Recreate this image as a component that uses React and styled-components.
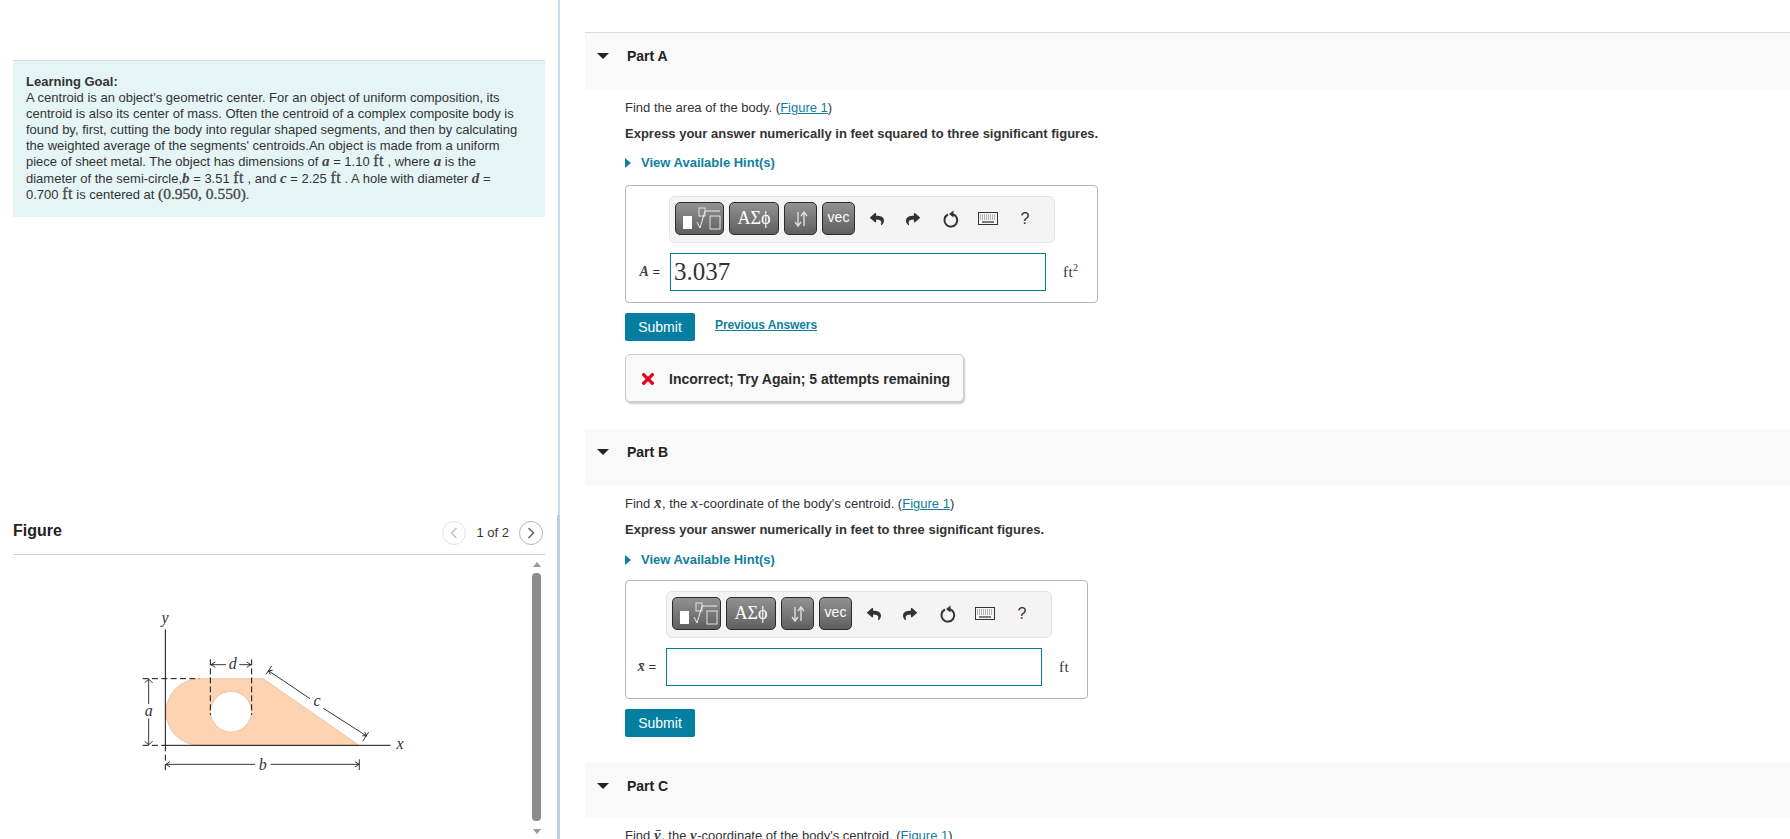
import React from "react";
import styled, { createGlobalStyle } from "styled-components";
import { FaReply, FaShare, FaTimes } from "react-icons/fa";

const GlobalStyle = createGlobalStyle`
  html, body { margin: 0; padding: 0; background: #fff; }
  body { font-family: "Liberation Sans", Arial, sans-serif; color: #333; font-size: 13px; }
`;

const Page = styled.div`
  display: flex;
  height: 839px;
  overflow: hidden;
`;

const LeftPane = styled.div`
  width: 560px;
  flex: none;
  display: flex;
  flex-direction: column;
`;

const GoalSection = styled.div`
  height: 515px;
  box-sizing: border-box;
  padding: 60px 13px 0;
  border-right: 2px solid #cbdbe9;
`;

const GoalBox = styled.div`
  height: 157px;
  box-sizing: border-box;
  padding: 13px 13px;
  background: #e5f5f6;
  border-top: 1px solid #cfdfe2;
  font-size: 13px;
  line-height: 16.1px;
  color: #333;
`;

const Math = styled.span`
  font-family: "Liberation Serif", serif;
  font-weight: ${(p) => (p.$upright ? "normal" : "bold")};
  font-style: ${(p) => (p.$upright ? "normal" : "italic")};
  font-size: ${(p) => p.$size || (p.$upright ? 16 : 15)}px;
  line-height: 0;
  letter-spacing: ${(p) => (p.$upright && !p.$size ? "0.4px" : "0")};
  -webkit-text-stroke: ${(p) => (p.$upright ? "0.3px" : "0")};
  color: #444;
`;

const FigureSection = styled.div`
  flex: 1;
  min-height: 0;
  padding: 1px 12px 0 13px;
  border-right: 3px solid #bcd1e5;
  display: flex;
  flex-direction: column;
`;

const FigureHead = styled.div`
  height: 39px;
  box-sizing: border-box;
  padding-bottom: 8px;
  border-bottom: 1px solid #d0d0d0;
  display: flex;
  align-items: center;
  justify-content: space-between;
`;

const FigureTitle = styled.div`
  font-size: 16px;
  font-weight: bold;
  color: #222;
`;

const Pager = styled.div`
  display: flex;
  align-items: center;
  gap: 10px;
  margin: 3px 2px 0 0;
  font-size: 13px;
`;

const PagerButton = styled.div`
  width: 24px;
  height: 24px;
  box-sizing: border-box;
  border-radius: 50%;
  border: 1px solid ${(p) => (p.$off ? "#e2e2e2" : "#b5b5b5")};
  display: flex;
  align-items: center;
  justify-content: center;
  color: ${(p) => (p.$off ? "#c4c4c4" : "#666")};
`;

const FigureBody = styled.div`
  flex: 1;
  min-height: 0;
  display: flex;
`;

const FigureSvg = styled.svg`
  width: 280px;
  height: 180px;
  margin: 45px 0 0 127px;
  flex: none;
`;

const ScrollBar = styled.div`
  margin-left: auto;
  width: 9px;
  height: 272px;
  margin-top: 7px;
  margin-right: 4px;
  display: flex;
  flex-direction: column;
  align-items: center;
  gap: 6px;
`;

const ScrollArrow = styled.div`
  width: 0;
  height: 0;
  border-left: 4px solid transparent;
  border-right: 4px solid transparent;
  border-bottom: ${(p) => (p.$down ? "none" : "5px solid #999")};
  border-top: ${(p) => (p.$down ? "5px solid #999" : "none")};
  margin-top: ${(p) => (p.$down ? 2 : 0)}px;
`;

const ScrollThumb = styled.div`
  flex: 1;
  width: 9px;
  border-radius: 4px;
  background: #8c8c8c;
`;

const RightPane = styled.div`
  flex: 1;
  min-width: 0;
  padding: 32px 0 0 25px;
`;

const PartBand = styled.div`
  height: ${(p) => p.$h}px;
  box-sizing: border-box;
  background: #f9f9f9;
  border-top: ${(p) => (p.$first ? "1px solid #ddd" : "none")};
  display: flex;
  align-items: flex-start;
  padding: ${(p) => p.$top}px 0 0 12px;
`;

const Caret = styled.span`
  width: 0;
  height: 0;
  border-left: 6px solid transparent;
  border-right: 6px solid transparent;
  border-top: 6px solid #222;
  margin: 6px 18px 0 0;
`;

const PartTitle = styled.div`
  font-size: 14px;
  font-weight: bold;
  color: #222;
  line-height: 18px;
`;

const PartBody = styled.div`
  padding: ${(p) => p.$top || 9}px 0 0 40px;
  height: ${(p) => p.$h}px;
  box-sizing: border-box;
`;

const Line = styled.div`
  line-height: 18px;
  margin-bottom: 8px;
  color: #333;
  font-weight: ${(p) => (p.$bold ? "bold" : "normal")};
`;

const Link = styled.a`
  color: #0f7f9f;
  text-decoration: underline;
  font-weight: ${(p) => (p.$bold ? "bold" : "normal")};
`;

const HintRow = styled.div`
  display: flex;
  align-items: center;
  color: #0f7f9f;
  font-weight: bold;
  font-size: 13px;
  line-height: 18px;
  margin-top: ${(p) => p.$gap}px;
`;

const HintCaret = styled.span`
  width: 0;
  height: 0;
  border-top: 5px solid transparent;
  border-bottom: 5px solid transparent;
  border-left: 6px solid #0f7f9f;
  margin-right: 10px;
`;

const AnswerBox = styled.div`
  width: ${(p) => p.$w}px;
  box-sizing: border-box;
  margin-top: ${(p) => p.$gap}px;
  padding: 10px 0;
  height: ${(p) => p.$h}px;
  border: 1px solid #b5b5b5;
  border-radius: 4px;
  display: flex;
  flex-direction: column;
`;

const Toolbar = styled.div`
  width: 386px;
  height: 47px;
  box-sizing: border-box;
  margin-left: ${(p) => p.$left}px;
  padding: 5px;
  display: flex;
  align-items: flex-start;
  background: #f4f4f4;
  border: 1px solid #e4e4e4;
  border-radius: 6px;
`;

const ToolButton = styled.div`
  width: ${(p) => p.$w}px;
  height: 33px;
  box-sizing: border-box;
  margin-right: 5px;
  border: 1px solid #2b2b2b;
  border-radius: 5px;
  background: linear-gradient(#929292, #5f5f5f);
  color: #fff;
  display: flex;
  align-items: center;
  justify-content: center;
  font-family: ${(p) => (p.$serif ? '"Liberation Serif", serif' : '"Liberation Sans", sans-serif')};
  font-size: ${(p) => (p.$serif ? 18 : 14)}px;
  padding-bottom: ${(p) => (p.$raised ? 4 : 0)}px;
`;

const ToolIcon = styled.div`
  width: ${(p) => p.$w || 37}px;
  height: 33px;
  flex: none;
  display: flex;
  align-items: center;
  justify-content: center;
  color: #333;
  font-size: ${(p) => p.$size || 14}px;
`;

const InputRow = styled.div`
  display: flex;
  align-items: center;
  margin-top: 10px;
`;

const InputLabel = styled.div`
  width: ${(p) => p.$w}px;
  flex: none;
  text-align: right;
  padding-right: 10px;
  box-sizing: border-box;
  font-size: 13px;
  color: #333;
`;

const LabelVar = styled.span`
  font-family: "Liberation Serif", serif;
  font-style: italic;
  font-weight: bold;
  font-size: 14px;
  color: #444;
`;

const AnswerInput = styled.div`
  width: 376px;
  height: 38px;
  box-sizing: border-box;
  border: 1px solid #007c9e;
  padding-left: 3px;
  font-family: "Liberation Serif", serif;
  font-size: 25px;
  line-height: 36px;
  color: #333;
`;

const Unit = styled.div`
  margin-left: 17px;
  font-family: "Liberation Serif", serif;
  font-size: 15px;
  letter-spacing: 0.4px;
  color: #333;
  sup { font-size: 10px; line-height: 0; }
`;

const ActionRow = styled.div`
  display: flex;
  align-items: flex-start;
  margin-top: 10px;
`;

const SubmitButton = styled.div`
  width: 70px;
  height: 28px;
  border-radius: 2px;
  background: #047fa1;
  color: #fff;
  font-size: 14px;
  display: flex;
  align-items: center;
  justify-content: center;
`;

const PreviousLink = styled(Link)`
  margin: 4px 0 0 20px;
  font-size: 12px;
  line-height: 16px;
  letter-spacing: -0.1px;
`;

const Feedback = styled.div`
  width: 339px;
  height: 48px;
  box-sizing: border-box;
  margin-top: 13px;
  padding: 1px 0 0 13px;
  background: #f9f9f9;
  border: 1px solid #ccc;
  border-radius: 5px;
  box-shadow: 1px 2px 2px #ccc;
  display: flex;
  align-items: center;
  gap: 12px;
  font-size: 14px;
  font-weight: bold;
  color: #2b2b2b;
`;

const XBar = styled.span`
  font-family: "Liberation Serif", serif;
  font-style: italic;
  font-weight: bold;
  font-size: 15px;
  line-height: 0;
  letter-spacing: 0.5px;
  color: #444;
`;

const Templates = () => (
  <svg width="47" height="31" viewBox="0 0 47 31">
    <rect x="7" y="13" width="9" height="13" fill="#fff" />
    <rect x="23" y="5" width="6" height="8" fill="none" stroke="#e2e2e2" />
    <path d="M21 19l3 6 5-17h15" fill="none" stroke="#eee" />
    <rect x="34" y="13" width="10" height="13" fill="none" stroke="#e2e2e2" />
  </svg>
);

const Arrows = () => (
  <svg width="20" height="20" viewBox="0 0 20 20" fill="none" stroke="#ddd" strokeWidth="1.4">
    <path d="M7 3v14M4 13l3 4 3-4" />
    <path d="M13 17V3M10 7l3-4 3 4" />
  </svg>
);

const ResetIcon = () => (
  <svg width="18" height="20" viewBox="0 0 18 20">
    <path d="M11 5.2a6.4 6.4 0 1 1-5 .3" fill="none" stroke="#333" strokeWidth="2" />
    <path d="M11.5 1.5v7l-4.5-3.5z" fill="#333" />
  </svg>
);

const KeyboardIcon = () => (
  <svg width="20" height="13" viewBox="0 0 20 13">
    <rect x="0.5" y="0.5" width="19" height="12" fill="#f4f4f4" stroke="#333" />
    <path d="M2 3h16M2 5h16M2 7h16" stroke="#777" strokeWidth="1" strokeDasharray="1 1" />
    <path d="M4 10h12" stroke="#555" strokeWidth="1.5" />
  </svg>
);

const MathToolbar = ({ left }) => (
  <Toolbar $left={left}>
    <ToolButton $w={49}><Templates /></ToolButton>
    <ToolButton $w={50} $serif>ΑΣϕ</ToolButton>
    <ToolButton $w={33}><Arrows /></ToolButton>
    <ToolButton $w={33} $raised>vec</ToolButton>
    <ToolIcon $w={34}><FaReply /></ToolIcon>
    <ToolIcon $w={38}><FaShare /></ToolIcon>
    <ToolIcon $w={37}><ResetIcon /></ToolIcon>
    <ToolIcon $w={38}><KeyboardIcon /></ToolIcon>
    <ToolIcon $w={36} $size={16}>?</ToolIcon>
  </Toolbar>
);

const Figure = () => (
  <FigureSvg viewBox="0 0 840 540">
    <path
      d="M178 236H370L657 436H178A100 100 0 0 1 178 236Z"
      fill="#fdd3b2"
      stroke="#e9b48f"
      strokeWidth="2"
    />
    <circle cx="273" cy="335" r="61" fill="#fff" stroke="#e9b48f" strokeWidth="2" />
    <g fill="none" stroke="#111" strokeWidth="3">
      <path d="M76 88V436H752" />
      <path d="M8 236H178M8 436H76M76 436V512" strokeDasharray="18 10" />
      <path d="M211 178V345M335 178V345" strokeDasharray="18 9" />
      <path d="M26 238V312M26 356V434M14 248L26 238L38 248M14 424L26 434L38 424" strokeWidth="2.5" />
      <path d="M213 194H258M298 194H333M226 186L213 194L226 202M320 186L333 194L320 202" strokeWidth="2.5" />
      <path d="M385 212L510 296M550 325L680 408M398 211L385 212L391 224M667 407L680 408L674 396" strokeWidth="2.5" />
      <path d="M378 223L395 198M668 424L686 396" strokeWidth="2.5" />
      <path d="M78 493H345M392 493H657M90 485L78 493L90 501M645 485L657 493L645 501" strokeWidth="2.5" />
      <path d="M658 478V510" strokeWidth="2.5" />
    </g>
    <g fontFamily="Liberation Serif, serif" fontStyle="italic" fontSize="48" fill="#333" textAnchor="middle">
      <text x="75" y="70">y</text>
      <text x="780" y="448">x</text>
      <text x="26" y="348">a</text>
      <text x="368" y="510">b</text>
      <text x="531" y="318">c</text>
      <text x="278" y="208">d</text>
    </g>
  </FigureSvg>
);

export default function App() {
  return (
    <Page>
      <GlobalStyle />
      <LeftPane>
        <GoalSection>
          <GoalBox>
            <b>Learning Goal:</b>
            <br />
            A centroid is an object's geometric center. For an object of uniform composition, its
            <br />
            centroid is also its center of mass. Often the centroid of a complex composite body is
            <br />
            found by, first, cutting the body into regular shaped segments, and then by calculating
            <br />
            the weighted average of the segments' centroids.An object is made from a uniform
            <br />
            piece of sheet metal. The object has dimensions of <Math>a</Math> = 1.10 <Math $upright>ft</Math> , where <Math>a</Math> is the
            <br />
            diameter of the semi-circle,<Math>b</Math> = 3.51 <Math $upright>ft</Math> , and <Math>c</Math> = 2.25 <Math $upright>ft</Math> . A hole with diameter <Math>d</Math> =
            <br />
            0.700 <Math $upright>ft</Math> is centered at <Math $upright $size={15.5}>(0.950, 0.550)</Math>.
          </GoalBox>
        </GoalSection>
        <FigureSection>
          <FigureHead>
            <FigureTitle>Figure</FigureTitle>
            <Pager>
              <PagerButton $off>
                <svg width="8" height="12" viewBox="0 0 8 12" fill="none" stroke="currentColor" strokeWidth="1.6"><path d="M6.5 1L1.5 6l5 5" /></svg>
              </PagerButton>
              <span>1 of 2</span>
              <PagerButton>
                <svg width="8" height="12" viewBox="0 0 8 12" fill="none" stroke="currentColor" strokeWidth="1.6"><path d="M1.5 1l5 5-5 5" /></svg>
              </PagerButton>
            </Pager>
          </FigureHead>
          <FigureBody>
            <Figure />
            <ScrollBar>
              <ScrollArrow />
              <ScrollThumb />
              <ScrollArrow $down />
            </ScrollBar>
          </FigureBody>
        </FigureSection>
      </LeftPane>

      <RightPane>
        <PartBand $first $h={58} $top={14}>
          <Caret />
          <PartTitle>Part A</PartTitle>
        </PartBand>
        <PartBody $h={339}>
          <Line>Find the area of the body. (<Link>Figure 1</Link>)</Line>
          <Line $bold>Express your answer numerically in feet squared to three significant figures.</Line>
          <HintRow $gap={11}><HintCaret />View Available Hint(s)</HintRow>
          <AnswerBox $w={473} $h={118} $gap={13}>
            <MathToolbar left={43} />
            <InputRow>
              <InputLabel $w={44}><LabelVar>A</LabelVar> =</InputLabel>
              <AnswerInput>3.037</AnswerInput>
              <Unit>ft<sup>2</sup></Unit>
            </InputRow>
          </AnswerBox>
          <ActionRow>
            <SubmitButton>Submit</SubmitButton>
            <PreviousLink $bold>Previous Answers</PreviousLink>
          </ActionRow>
          <Feedback>
            <FaTimes color="#e2001a" size={18} />
            Incorrect; Try Again; 5 attempts remaining
          </Feedback>
        </PartBody>
        <PartBand $h={56} $top={14}>
          <Caret />
          <PartTitle>Part B</PartTitle>
        </PartBand>
        <PartBody $h={278} $top={10}>
          <Line>Find <XBar>x̄</XBar>, the <XBar>x</XBar>-coordinate of the body's centroid. (<Link>Figure 1</Link>)</Line>
          <Line $bold>Express your answer numerically in feet to three significant figures.</Line>
          <HintRow $gap={12}><HintCaret />View Available Hint(s)</HintRow>
          <AnswerBox $w={463} $h={119} $gap={11}>
            <MathToolbar left={40} />
            <InputRow>
              <InputLabel $w={40}><LabelVar>x̄</LabelVar> =</InputLabel>
              <AnswerInput />
              <Unit>ft</Unit>
            </InputRow>
          </AnswerBox>
          <ActionRow>
            <SubmitButton>Submit</SubmitButton>
          </ActionRow>
        </PartBody>
        <PartBand $h={55} $top={14}>
          <Caret />
          <PartTitle>Part C</PartTitle>
        </PartBand>
        <PartBody>
          <Line>Find <XBar>ȳ</XBar>, the <XBar>y</XBar>-coordinate of the body's centroid. (<Link>Figure 1</Link>)</Line>
        </PartBody>
      </RightPane>
    </Page>
  );
}
